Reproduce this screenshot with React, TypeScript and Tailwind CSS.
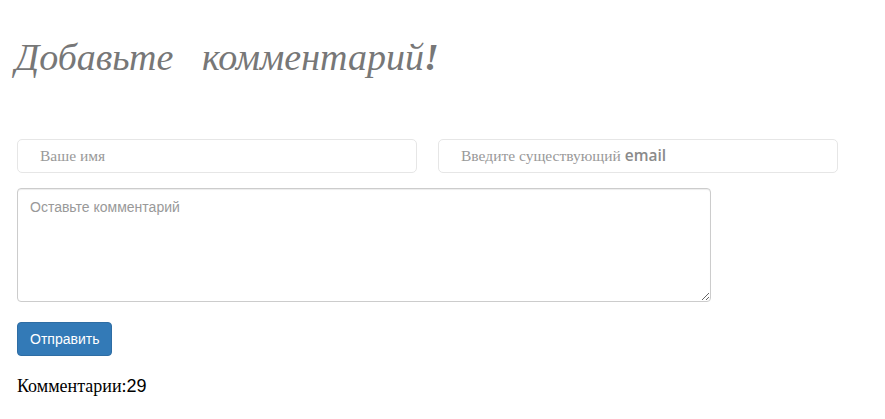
import React from "react";

const inputCls =
  "h-[34px] w-[400px] rounded-[5px] border border-[#e6e6e6] pl-[22px] font-['Liberation_Serif',serif] text-[15.5px] text-[#555] outline-none placeholder:text-[#999]";

export default function App() {
  return (
    <div className="min-h-[419px] w-[885px] bg-white">
      <h1 className="ml-[15px] pt-[35px] font-['Liberation_Serif',serif] text-[38px] italic leading-[44px] text-[#777777]">
        Добавьте&nbsp;&nbsp; комментарий<span className="font-bold">!</span>
      </h1>

      <div className="ml-[17px] mt-[60px] flex gap-[21px]">
        <input type="text" placeholder="Ваше имя" className={inputCls} />
        <div className="relative">
          <input type="email" aria-label="email" className={inputCls} />
          <span className="pointer-events-none absolute left-[23px] top-1/2 -translate-y-1/2 whitespace-nowrap font-['Liberation_Serif',serif] text-[15.5px] text-[#999]">
            Введите существующий{" "}
            <span className="font-['Open_Sans',sans-serif] font-semibold text-[#8a8a8a]">email</span>
          </span>
        </div>
      </div>

      <textarea
        placeholder="Оставьте комментарий"
        className="ml-[17px] mt-[15px] block h-[114px] w-[694px] rounded-[4px] border border-[#cccccc] px-[12px] py-[8px] font-['Liberation_Sans',Arial,sans-serif] text-[14px] text-[#555] shadow-[inset_0_1px_1px_rgba(0,0,0,0.075)] outline-none placeholder:text-[#999]"
      />

      <button className="ml-[17px] mt-[20px] block h-[34px] rounded-[4px] border border-[#2e6da4] bg-[#337ab7] px-[12px] font-['Liberation_Sans',Arial,sans-serif] text-[14px] text-white">
        Отправить
      </button>

      <div className="ml-[17px] mt-[19px] font-['Liberation_Serif',serif] text-[18px] leading-[22px] text-black">
        Комментарии:
        <span className="font-['Liberation_Sans',Arial,sans-serif]">29</span>
      </div>
    </div>
  );
}
